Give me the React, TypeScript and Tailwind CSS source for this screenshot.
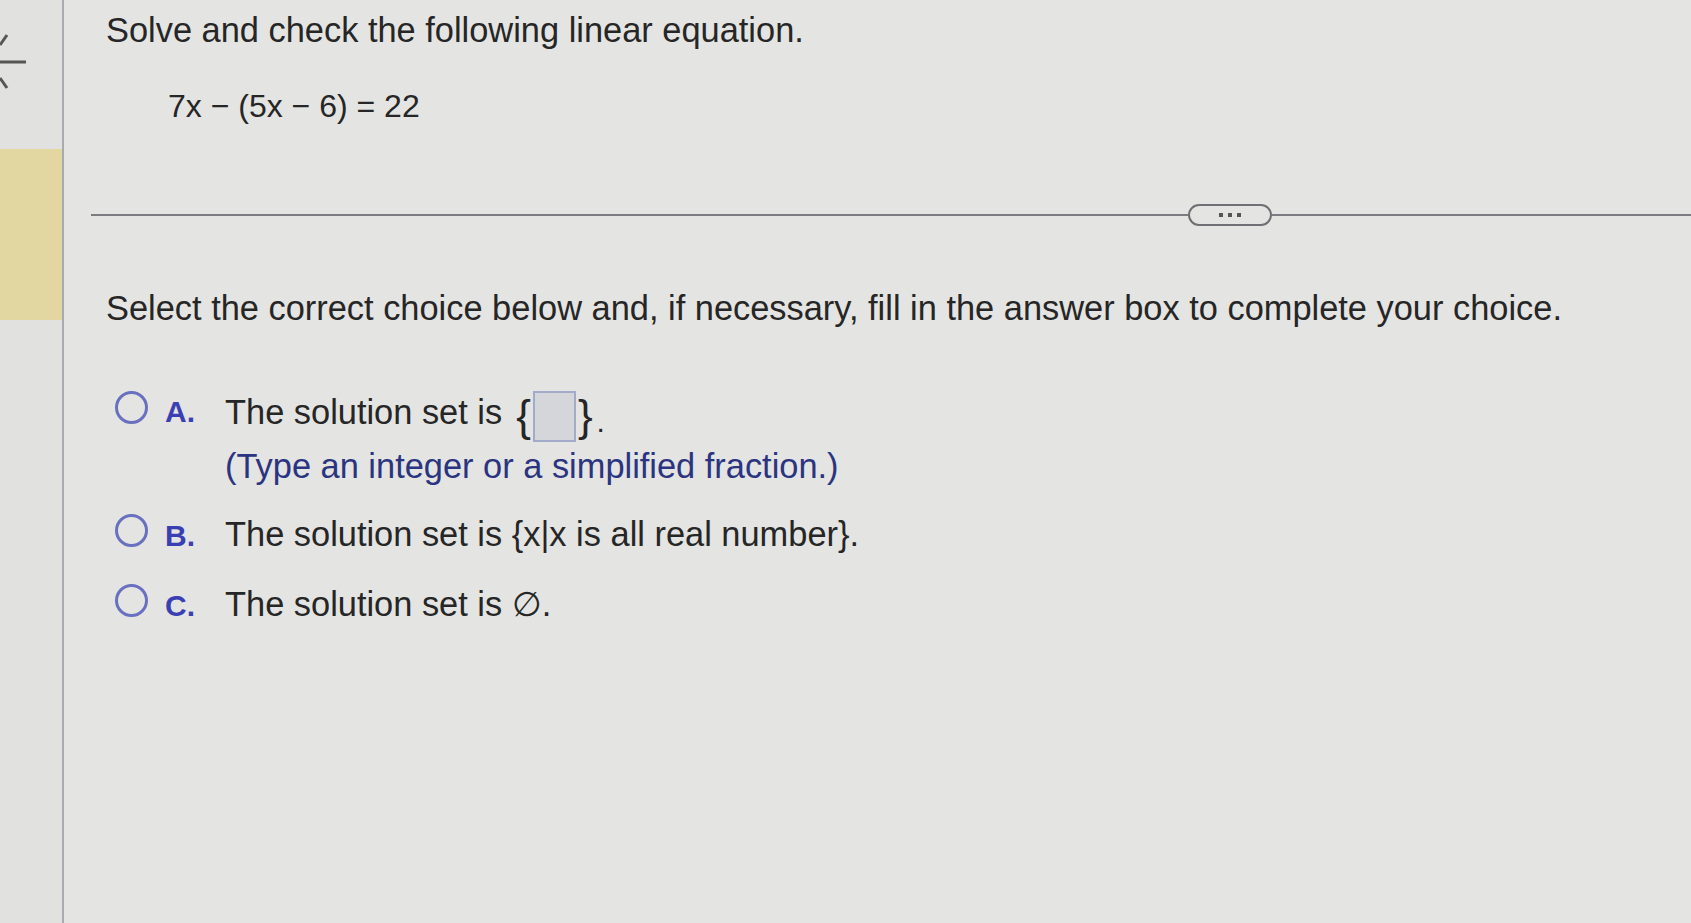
import React from 'react';

const font = { fontFamily: '"Liberation Sans", Arial, sans-serif' };

function Radio() {
  return <div className="h-[33px] w-[33px] shrink-0 rounded-full border-[3px] border-[#6a70c0]" />;
}

function Choice({ letter, children }: { letter: string; children: React.ReactNode }) {
  return (
    <div className="flex h-[40px] items-center">
      <div className="-mt-[10px] flex w-[52px] shrink-0 items-center pl-[2px]">
        <Radio />
      </div>
      <span className="w-[60px] shrink-0 text-[30px] font-bold text-[#3a40b4]">{letter}</span>
      <span className="text-[34.4px] text-[#262626]">{children}</span>
    </div>
  );
}

export default function App() {
  return (
    <div className="flex h-[923px] w-[1691px] overflow-hidden bg-[#e4e4e2]" style={font}>
      <aside className="relative flex w-[64px] shrink-0 flex-col border-r-2 border-[#a9a9b0] bg-[#e1e1df]">
        <svg className="absolute left-0 top-[30px]" width="30" height="64" viewBox="0 0 30 64">
          <path d="M0 32 H26" stroke="#555" strokeWidth="3" />
          <path d="M0 15 L7 5" stroke="#555" strokeWidth="3" />
          <path d="M0 48 L7 58" stroke="#555" strokeWidth="3" />
        </svg>
        <div className="mt-[149px] h-[171px] w-full bg-[#e2d7a0]" />
      </aside>

      <main className="flex-1 text-[#262626]">
        <h1 className="ml-[42px] mt-[10px] text-[34.4px] leading-[40px]">Solve and check the following linear equation.</h1>
        <p className="ml-[104px] mt-[36px] text-[32px] leading-[40px]">7x − (5x − 6) = 22</p>

        <div className="ml-[27px] mt-[78px] flex h-[22px] items-center">
          <div className="h-[2px] w-[1097px] bg-[#7c7c80]" />
          <div className="flex h-[22px] w-[84px] shrink-0 items-center justify-center gap-[5px] rounded-full border-2 border-[#6f6f74]">
            <span className="h-[4px] w-[4px] bg-[#555]" />
            <span className="h-[4px] w-[4px] bg-[#555]" />
            <span className="h-[4px] w-[4px] bg-[#555]" />
          </div>
          <div className="h-[2px] flex-1 bg-[#7c7c80]" />
        </div>

        <p className="ml-[42px] mt-[62px] text-[34.4px] leading-[40px]">
          Select the correct choice below and, if necessary, fill in the answer box to complete your choice.
        </p>

        <div className="ml-[49px] mt-[59px]">
          <div className="flex h-[52px] items-center">
            <div className="-mt-[12px] flex w-[52px] shrink-0 items-center pl-[2px]">
              <Radio />
            </div>
            <span className="-mt-[4px] w-[60px] shrink-0 text-[30px] font-bold text-[#3a40b4]">A.</span>
            <span className="text-[34.4px] text-[#262626]">The solution set is</span>
            <span className="ml-[14px] mt-[6px] flex items-center">
              <span className="text-[44px] font-light leading-[52px] text-[#262626]">{'{'}</span>
              <span className="mx-[2px] h-[51px] w-[43px] border-2 border-[#a3abca] bg-[#d4d6da]" />
              <span className="text-[44px] font-light leading-[52px] text-[#262626]">{'}'}</span>
              <span className="ml-[4px] mt-[10px] text-[30px] text-[#262626]">.</span>
            </span>
          </div>
          <div className="mt-[8px] flex h-[40px] items-center pl-[112px]">
            <span className="text-[34.4px] text-[#2b3480]">(Type an integer or a simplified fraction.)</span>
          </div>

          <div className="mt-[28px]">
            <Choice letter="B.">The solution set is {'{'}x|x is all real number{'}'}.</Choice>
          </div>
          <div className="mt-[30px]">
            <Choice letter="C.">The solution set is ∅.</Choice>
          </div>
        </div>
      </main>
    </div>
  );
}
